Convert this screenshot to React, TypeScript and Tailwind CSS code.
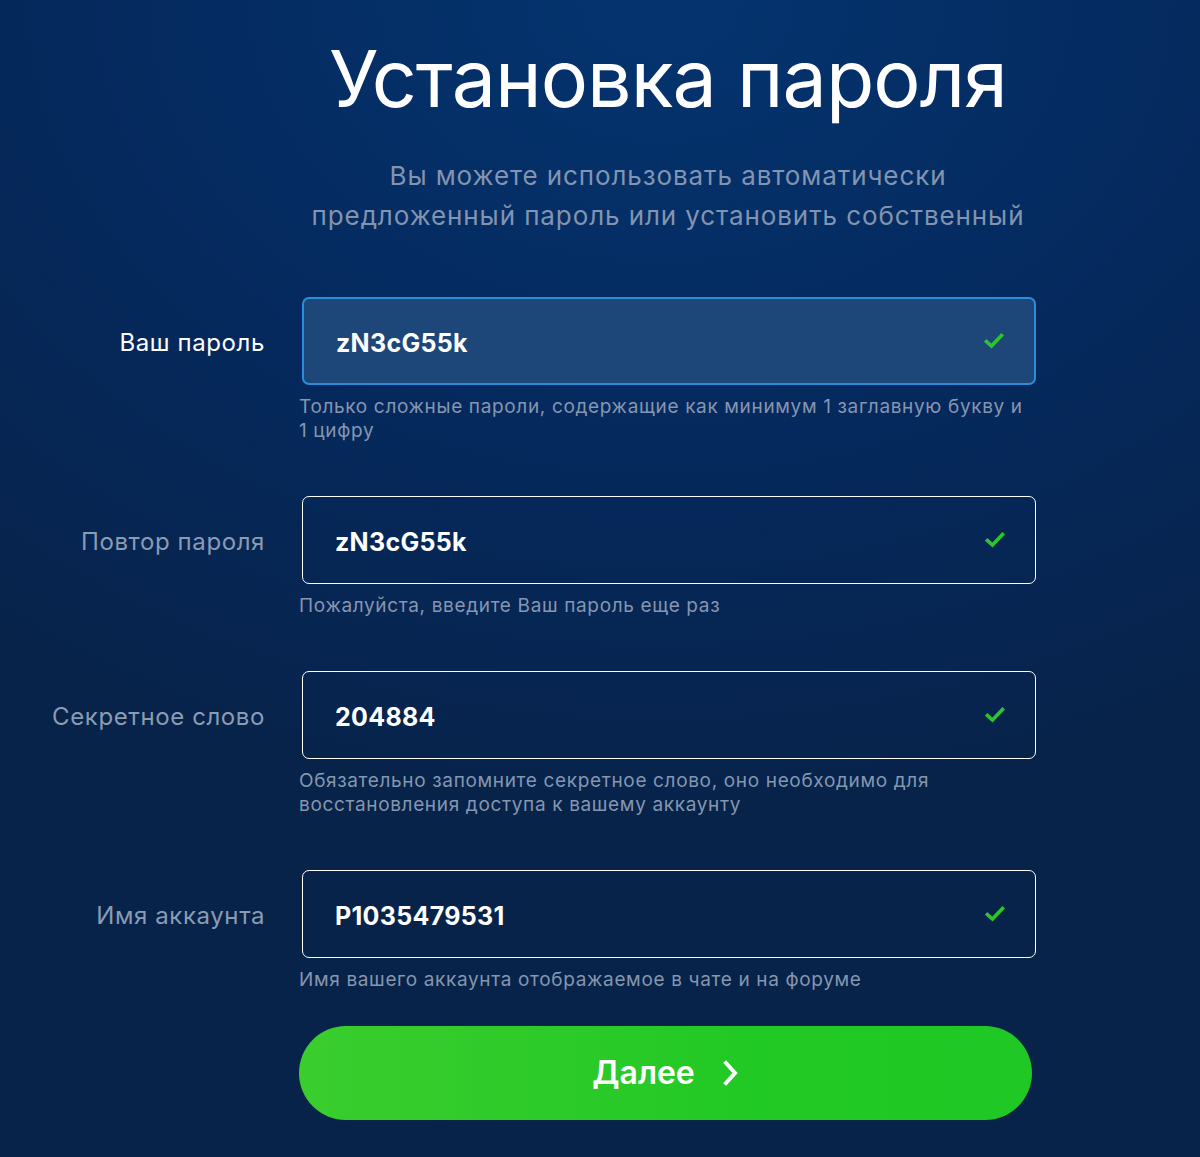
import React from "react";

const font = { fontFamily: "Inter, 'Noto Sans', 'Open Sans', sans-serif" };

function Check() {
  return (
    <svg width="20" height="16" viewBox="0 0 20 16" fill="none">
      <path d="M2.5 8.5 L7.5 13 L17.5 2.5" stroke="#2dc42e" strokeWidth="3.6" strokeLinecap="square" strokeLinejoin="miter" />
    </svg>
  );
}

type RowProps = {
  label: string;
  value: string;
  help: React.ReactNode;
  active?: boolean;
  gapClass: string;
};

function Row({ label, value, help, active, gapClass }: RowProps) {
  return (
    <div className={`flex ${gapClass}`}>
      <div className="w-[265px] h-[88px] flex items-center justify-end shrink-0 pt-[4px]">
        <span className={`text-[24px] tracking-[0.6px] ${active ? "text-white" : "text-[#8a9bb4]"}`}>{label}</span>
      </div>
      <div className="ml-[34px] w-[736px]">
        <div
          className={`ml-[3px] h-[88px] w-[734px] rounded-[7px] flex items-center justify-between pl-[32px] pr-[30px] ${
            active ? "bg-[#1d4679] border-2 border-[#2a8ddb]" : "border-[1.5px] border-white"
          }`}
        >
          <span className="text-white text-[25px] font-bold tracking-[0.3px] pt-[5px]">{value}</span>
          <Check />
        </div>
        <div className="mt-[10px] text-[19px] leading-[24px] tracking-[0.65px] text-[#8596b0]">{help}</div>
      </div>
    </div>
  );
}

export default function App() {
  return (
    <div
      className="min-h-[1157px] w-full bg-[radial-gradient(ellipse_90%_70%_at_55%_0%,#04346f_0%,#05295d_55%,#07234a_100%)]"
      style={font}
    >
      <div className="w-[1200px] mx-auto pt-[30px]">
        <div className="ml-[300px] w-[736px] flex flex-col items-center">
          <h1 className="text-white text-[79px] leading-[96px] font-normal tracking-[-1px] whitespace-nowrap">
            Установка пароля
          </h1>
          <p className="mt-[30px] text-center text-[26px] leading-[40px] tracking-[0.9px] text-[#8294b0] whitespace-nowrap">
            Вы можете использовать автоматически
            <br />
            предложенный пароль или установить собственный
          </p>
        </div>
        <div className="mt-[61px] flex flex-col">
          <Row
            active
            label="Ваш пароль"
            value="zN3cG55k"
            help="Только сложные пароли, содержащие как минимум 1 заглавную букву и 1 цифру"
            gapClass="mb-[53px]"
          />
          <Row
            label="Повтор пароля"
            value="zN3cG55k"
            help="Пожалуйста, введите Ваш пароль еще раз"
            gapClass="mb-[53px]"
          />
          <Row
            label="Секретное слово"
            value="204884"
            help="Обязательно запомните секретное слово, оно необходимо для восстановления доступа к вашему аккаунту"
            gapClass="mb-[53px]"
          />
          <Row
            label="Имя аккаунта"
            value="P1035479531"
            help="Имя вашего аккаунта отображаемое в чате и на форуме"
            gapClass="mb-[34px]"
          />
          <div className="ml-[299px]">
            <button className="w-[733px] h-[94px] rounded-full bg-[linear-gradient(90deg,#3acd2e_0%,#22c925_60%,#1fc824_100%)] flex items-center justify-center gap-[28px]">
              <span className="text-white text-[32px] font-semibold">Далее</span>
              <svg width="16" height="26" viewBox="0 0 16 26" fill="none">
                <path d="M3 3 L12 13 L3 23" stroke="white" strokeWidth="4" strokeLinecap="square" strokeLinejoin="miter" />
              </svg>
            </button>
          </div>
        </div>
      </div>
    </div>
  );
}
